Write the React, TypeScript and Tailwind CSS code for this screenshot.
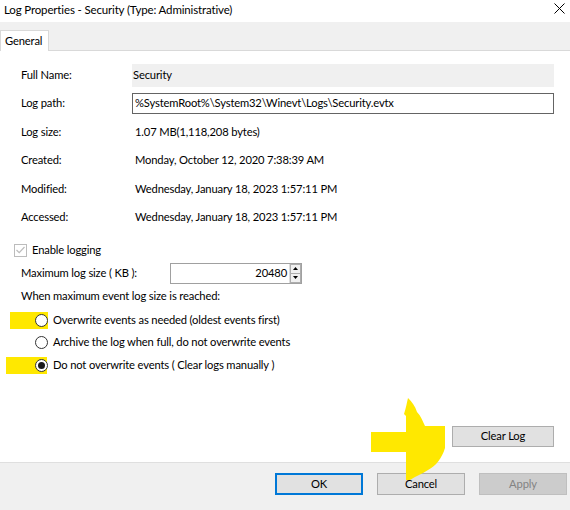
const font = { fontFamily: 'Lato, "Noto Sans", sans-serif' };

function InfoRow({ label, children }: { label: string; children: React.ReactNode }) {
    return (
        <div className="flex h-[28.5px] items-center">
            <div className="w-[111px] shrink-0">{label}</div>
            <div className="flex-1 pr-[16px]">{children}</div>
        </div>
    );
}

function Radio({ checked, label, mark }: { checked?: boolean; label: string; mark?: string }) {
    return (
        <div className="relative flex h-[22.5px] items-center pl-[35px]">
            {mark && <div className={`absolute top-[3px] h-[17px] bg-[#ffe800] ${mark}`} />}
            <span className="relative flex h-[13px] w-[13px] items-center justify-center rounded-full border border-[#333] bg-white">
                {checked && <span className="h-[7px] w-[7px] rounded-full bg-[#1a1a1a]" />}
            </span>
            <span className="relative ml-[5px]">{label}</span>
        </div>
    );
}

function Btn({ children, kind }: { children: React.ReactNode; kind?: 'default' | 'disabled' }) {
    const cls =
        kind === 'default'
            ? 'border-2 border-[#0078d7] bg-[#e1e1e1] text-black'
            : kind === 'disabled'
              ? 'border border-[#bfbfbf] bg-[#cccccc] text-[#838383]'
              : 'border border-[#adadad] bg-[#e1e1e1] text-black';
    return (
        <div className={`flex h-[22px] w-[88px] items-center justify-center ${cls}`}>{children}</div>
    );
}

export default function App() {
    return (
        <div
            className="relative flex h-[510px] w-[570px] flex-col overflow-hidden bg-white text-[11.2px] tracking-[-0.15px] text-black"
            style={font}
        >
            {/* title bar */}
            <div className="flex h-[22px] shrink-0 items-start justify-between pl-[4px] pr-[5px] pt-[1px]">
                <span className="text-[11.5px]">Log Properties - Security (Type: Administrative)</span>
                <svg className="mt-[2px]" width="11" height="11" viewBox="0 0 11 11">
                    <path d="M0.5 0.5 L10.5 10.5 M10.5 0.5 L0.5 10.5" stroke="#000" strokeWidth="1" />
                </svg>
            </div>

            {/* tabs */}
            <div className="flex h-[29px] shrink-0 items-end border-b border-[#d9d9d9] bg-[#f0f0f0]">
                <div className="-mb-px flex h-[21px] w-[49px] items-center border border-b-0 border-[#d9d9d9] bg-white pl-[4px]">
                    General
                </div>
            </div>

            {/* content */}
            <div className="flex flex-1 flex-col pl-[21px] pt-[10px]">
                <InfoRow label="Full Name:">
                    <div className="flex h-[23px] items-center bg-[#f0f0f0] pl-[1px]">Security</div>
                </InfoRow>
                <InfoRow label="Log path:">
                    <div className="flex h-[21px] items-center border border-[#646464] pl-[2px]">
                        %SystemRoot%\System32\Winevt\Logs\Security.evtx
                    </div>
                </InfoRow>
                <InfoRow label="Log size:">
                    <span className="pl-[3px]">1.07 MB(1,118,208 bytes)</span>
                </InfoRow>
                <InfoRow label="Created:">
                    <span className="pl-[3px]">Monday, October 12, 2020 7:38:39 AM</span>
                </InfoRow>
                <InfoRow label="Modified:">
                    <span className="pl-[3px]">Wednesday, January 18, 2023 1:57:11 PM</span>
                </InfoRow>
                <InfoRow label="Accessed:">
                    <span className="pl-[3px]">Wednesday, January 18, 2023 1:57:11 PM</span>
                </InfoRow>

                <div className="-ml-[7px] mt-[8px] flex h-[20px] items-center">
                    <span className="flex h-[13px] w-[13px] items-center justify-center border border-[#bcbcbc]">
                        <svg width="9" height="8" viewBox="0 0 9 8">
                            <path d="M0.5 4 L3.2 6.7 L8.5 1" stroke="#bcbcbc" strokeWidth="1.2" fill="none" />
                        </svg>
                    </span>
                    <span className="ml-[5px]">Enable logging</span>
                </div>

                <div className="mt-[2px] flex h-[22px] items-center">
                    <span className="w-[149px]">Maximum log size ( KB ):</span>
                    <div className="flex h-[21px] w-[132px] items-center border border-[#a0a0a0]">
                        <span className="flex-1 pr-[2px] text-right">20480</span>
                        <div className="flex h-full w-[12px] flex-col border-l border-[#dcdcdc]">
                            <div className="flex flex-1 items-center justify-center border border-[#adadad] bg-[#f0f0f0]">
                                <svg width="5" height="3" viewBox="0 0 5 3"><path d="M2.5 0 L5 3 L0 3 Z" fill="#000" /></svg>
                            </div>
                            <div className="flex flex-1 items-center justify-center border border-t-0 border-[#adadad] bg-[#f0f0f0]">
                                <svg width="5" height="3" viewBox="0 0 5 3"><path d="M0 0 L5 0 L2.5 3 Z" fill="#000" /></svg>
                            </div>
                        </div>
                    </div>
                </div>

                <div className="flex h-[24px] items-center">When maximum event log size is reached:</div>

                <div className="-ml-[21px] mt-[1px] flex flex-col">
                    <Radio label="Overwrite events as needed (oldest events first)" mark="left-[10px] w-[38px]" />
                    <Radio label="Archive the log when full, do not overwrite events" />
                    <Radio checked label="Do not overwrite events ( Clear logs manually )" mark="left-[6px] w-[41px]" />
                </div>

                <div className="mt-auto mb-[15px] flex justify-end pr-[16px]">
                    <div className="flex h-[21px] w-[102px] items-center justify-center border border-[#adadad] bg-[#e1e1e1]">
                        Clear Log
                    </div>
                </div>
            </div>

            {/* footer */}
            <div className="flex h-[48px] shrink-0 gap-[14px] border-t border-[#dfdfdf] bg-[#f0f0f0] pl-[275px] pt-[10px]">
                <Btn kind="default">OK</Btn>
                <Btn>Cancel</Btn>
                <Btn kind="disabled">Apply</Btn>
            </div>

            {/* yellow annotation arrow */}
            <svg className="absolute left-[368px] top-[396px]" width="80" height="86" viewBox="0 0 80 86">
                <path
                    d="M40 2 C44 6 47 10 49 16 C53 20 55 26 57 30 L77 30 L77 52 C74 62 68 70 60 74 C54 78 48 80 42 84 L38 84 L38 56 L3 56 L3 36 L38 36 L38 20 L36 18 C38 12 39 6 40 2 Z"
                    fill="#ffe800"
                />
            </svg>
        </div>
    );
}
